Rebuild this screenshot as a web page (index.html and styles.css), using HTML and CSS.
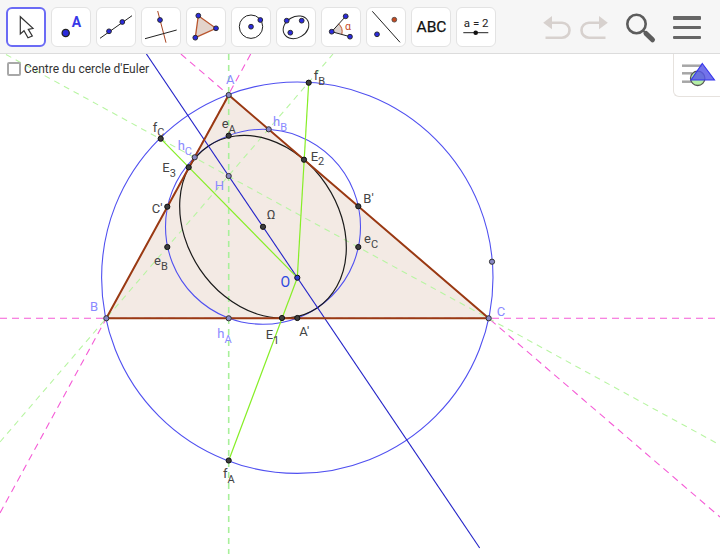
FILE: index.html
```html
<!DOCTYPE html>
<html lang="fr">
<head>
<meta charset="utf-8">
<title>Centre du cercle d'Euler</title>
<link rel="stylesheet" href="styles.css">
</head>
<body>
<div class="app">
  <header class="toolbar">
    <div class="tools">
      <button class="tool selected"><svg viewBox="0 0 36 36" class="ico"><path class="cursor" d="M12.300 7.700 L12.300 25 L16 21.700 L20 28.700 L24.300 27 L20.300 20.300 L25 19.300 Z"/></svg></button>
      <button class="tool"><svg viewBox="0 0 38 38" class="ico"><circle class="pt-big" cx="13.700" cy="25" r="3.600"/><text class="ico-a" x="19.700" y="18.700">A</text></svg></button>
      <button class="tool"><svg viewBox="0 0 38 38" class="ico"><line class="ln" x1="3" y1="30.300" x2="35" y2="7.700"/><circle class="pt" cx="12" cy="23.300" r="2.400"/><circle class="pt" cx="25.300" cy="14" r="2.400"/></svg></button>
      <button class="tool"><svg viewBox="0 0 38 38" class="ico"><line class="ln-red" x1="15.700" y1="3" x2="24" y2="34.700"/><line class="ln" x1="3" y1="30.700" x2="34.700" y2="22"/><circle class="pt" cx="18" cy="12" r="2.400"/></svg></button>
      <button class="tool"><svg viewBox="0 0 38 38" class="ico"><polygon class="tri" points="11.300,7.700 29,20.300 8.300,29.700"/><circle class="pt" cx="11.300" cy="7.700" r="2.400"/><circle class="pt" cx="29" cy="20.300" r="2.400"/><circle class="pt" cx="8.300" cy="29.700" r="2.400"/></svg></button>
      <button class="tool"><svg viewBox="0 0 38 38" class="ico"><circle class="ln-none" cx="19" cy="18.700" r="11.700"/><circle class="pt" cx="19" cy="18.700" r="2.400"/><circle class="pt" cx="28.300" cy="12" r="2.400"/></svg></button>
      <button class="tool"><svg viewBox="0 0 38 38" class="ico"><ellipse class="ln-none" cx="19" cy="19.300" rx="13.500" ry="10.500" transform="rotate(-30 19 19.300)"/><circle class="pt" cx="9.700" cy="12.700" r="2.400"/><circle class="pt" cx="24.700" cy="12.700" r="2.400"/><circle class="pt" cx="13.300" cy="24.700" r="2.400"/></svg></button>
      <button class="tool"><svg viewBox="0 0 38 38" class="ico"><path class="wedge" d="M9.700 23.700 L16.500 15.800 A10.500 10.500 0 0 1 19.800 26.300 Z"/><path class="arc" d="M16.500 15.800 A10.500 10.500 0 0 1 19.800 26.300"/><line class="ln" x1="9.700" y1="23.700" x2="23.700" y2="8.300"/><line class="ln" x1="9.700" y1="23.700" x2="28" y2="28.700"/><circle class="pt" cx="23.700" cy="8.300" r="2.400"/><circle class="pt" cx="9.700" cy="23.700" r="2.400"/><circle class="pt" cx="28" cy="28.700" r="2.400"/><text class="ico-alpha" x="23" y="21.700">α</text></svg></button>
      <button class="tool"><svg viewBox="0 0 38 38" class="ico"><line class="ln" x1="5.300" y1="3.300" x2="33" y2="34.300"/><circle class="pt-red" cx="27.300" cy="11.700" r="2.400"/><circle class="pt" cx="10" cy="26.300" r="2.400"/></svg></button>
      <button class="tool"><svg viewBox="0 0 38 38" class="ico"><text class="ico-abc" x="19.500" y="24.300">ABC</text></svg></button>
      <button class="tool"><svg viewBox="0 0 38 38" class="ico"><text class="ico-eq" x="19.200" y="18.700">a = 2</text><line class="ln" x1="6.300" y1="24.700" x2="31.300" y2="24.700"/><circle class="pt-black" cx="18.700" cy="24.700" r="2.300"/></svg></button>
    </div>
    <div class="actions">
      <svg class="act act-undo" viewBox="0 0 28 26"><path class="hist" d="M7 7.700 H19 A7.500 7.500 0 0 1 19 22.700 H2.500"/><path class="hist-head" d="M0.200 7.700 L9 1 V14.300 Z"/></svg>
      <svg class="act act-redo" viewBox="0 0 28 26"><path class="hist" d="M21 7.700 H9 A7.500 7.500 0 0 0 9 22.700 H25.500"/><path class="hist-head" d="M27.800 7.700 L19 1 V14.300 Z"/></svg>
      <svg class="act act-search" viewBox="0 0 30 30"><circle class="lens" cx="10.500" cy="11" r="9.200"/><line class="lens-stem" x1="17" y1="17.500" x2="20" y2="20.500"/><line class="lens-handle" x1="20" y1="20.500" x2="26.500" y2="26.800"/></svg>
      <div class="menu"><span class="bar"></span><span class="bar"></span><span class="bar"></span></div>
    </div>
  </header>
  <main class="canvas">
    <svg class="board" viewBox="0 54 720 500">
      <polygon class="t-fill" points="228.700,95 106.300,318.300 488.700,318.300"/>

      <line class="pink" x1="0" y1="318.300" x2="720" y2="318.300"/>
      <line class="pink" x1="0" y1="513" x2="250.700" y2="54"/>
      <line class="pink" x1="180.900" y1="54" x2="720" y2="517"/>

      <line class="lgreen vert" x1="228.700" y1="54" x2="228.700" y2="554"/>
      <line class="lgreen" x1="0" y1="442" x2="333" y2="54"/>
      <line class="lgreen" x1="6" y1="54.500" x2="720" y2="445"/>

      <circle class="blue" cx="297.300" cy="277.700" r="195.700"/>
      <circle class="blue" cx="263" cy="226.800" r="97.500"/>
      <ellipse class="black" cx="263" cy="226.800" rx="97.500" ry="76" transform="rotate(56 263 226.800)"/>

      <line class="euler" x1="146.400" y1="54" x2="479.700" y2="548"/>
      <line class="green" x1="228.700" y1="460.500" x2="297.300" y2="277.700"/>
      <line class="green" x1="308.700" y1="82.700" x2="297.300" y2="277.700"/>
      <line class="green" x1="160.700" y1="138.700" x2="297.300" y2="277.700"/>

      <polyline class="side" points="488.700,318.300 106.300,318.300 228.700,95 488.700,318.300"/>

      <circle class="p-grey" cx="228.700" cy="95" r="2.600"/>
      <circle class="p-grey" cx="106.300" cy="318.300" r="2.600"/>
      <circle class="p-grey" cx="488.700" cy="318.300" r="2.600"/>
      <circle class="p-grey" cx="228.700" cy="176" r="2.600"/>
      <circle class="p-grey" cx="228.700" cy="318.300" r="2.600"/>
      <circle class="p-grey" cx="268.700" cy="129.300" r="2.600"/>
      <circle class="p-grey" cx="194.700" cy="157.300" r="2.600"/>
      <circle class="p-grey" cx="492" cy="261.700" r="2.600"/>

      <circle class="p-dark" cx="228.700" cy="460.500" r="2.600"/>
      <circle class="p-dark" cx="308.700" cy="82.700" r="2.600"/>
      <circle class="p-dark" cx="160.700" cy="138.700" r="2.600"/>
      <circle class="p-dark" cx="282" cy="318" r="2.600"/>
      <circle class="p-dark" cx="304" cy="159.700" r="2.600"/>
      <circle class="p-dark" cx="188.700" cy="167.300" r="2.600"/>
      <circle class="p-dark" cx="228.700" cy="135.700" r="2.600"/>
      <circle class="p-dark" cx="167.300" cy="247" r="2.600"/>
      <circle class="p-dark" cx="358.300" cy="247" r="2.600"/>
      <circle class="p-dark" cx="297.300" cy="318" r="2.600"/>
      <circle class="p-dark" cx="358.300" cy="206.300" r="2.600"/>
      <circle class="p-dark" cx="167.300" cy="206.700" r="2.600"/>
      <circle class="p-dark" cx="263" cy="226.800" r="2.600"/>
      <circle class="p-o" cx="297.300" cy="277.700" r="2.600"/>

      <text class="lb-blue" x="226" y="84">A</text>
      <text class="lb-blue" x="90" y="311">B</text>
      <text class="lb-blue" x="496.700" y="316">C</text>
      <text class="lb-blue" x="214.700" y="190">H</text>
      <text class="lb-blue" x="217.300" y="338">h<tspan class="sub" dy="4.500">A</tspan></text>
      <text class="lb-blue" x="273" y="126">h<tspan class="sub" dy="4.500">B</tspan></text>
      <text class="lb-blue" x="177.700" y="150">h<tspan class="sub" dy="4.500">C</tspan></text>

      <text class="lb-dark" x="223" y="478">f<tspan class="sub" dy="4.500">A</tspan></text>
      <text class="lb-dark" x="313.700" y="80">f<tspan class="sub" dy="4.500">B</tspan></text>
      <text class="lb-dark" x="152.700" y="131.700">f<tspan class="sub" dy="4.500">C</tspan></text>
      <text class="lb-dark" x="265.700" y="339.300">E<tspan class="sub" dy="4.500">1</tspan></text>
      <text class="lb-dark" x="310.700" y="160.700">E<tspan class="sub" dy="4.500">2</tspan></text>
      <text class="lb-dark" x="162.300" y="172.300">E<tspan class="sub" dy="4.500">3</tspan></text>
      <text class="lb-dark" x="221.700" y="128">e<tspan class="sub" dy="4.500">A</tspan></text>
      <text class="lb-dark" x="154" y="265">e<tspan class="sub" dy="4.500">B</tspan></text>
      <text class="lb-dark" x="364" y="243.300">e<tspan class="sub" dy="4.500">C</tspan></text>
      <text class="lb-dark" x="299.300" y="336">A'</text>
      <text class="lb-dark" x="363.300" y="202.700">B'</text>
      <text class="lb-dark" x="151.700" y="213.300">C'</text>
      <text class="lb-dark" x="266.700" y="218.700">Ω</text>
      <text class="lb-o" x="280.500" y="286.500">O</text>
    </svg>

    <label class="euler-check">
      <span class="box"></span>
      <span class="check-text">Centre du cercle d'Euler</span>
    </label>

    <div class="style-tab">
      <svg class="style-ico" viewBox="0 0 34 26">
        <line class="sl" x1="0" y1="2.700" x2="20" y2="2.700"/>
        <line class="sl" x1="0" y1="10.300" x2="10" y2="10.300"/>
        <line class="sl" x1="0" y1="18.700" x2="10" y2="18.700"/>
        <circle class="s-circle" cx="15.700" cy="15.300" r="7.200"/>
        <polygon class="s-tri" points="20.300,0.500 32.500,17 9,17"/>
      </svg>
    </div>
  </main>
</div>
</body>
</html>
```
FILE: styles.css
```css
* { box-sizing: border-box; }
html, body { margin: 0; padding: 0; background: #fff; }
body { font-family: Roboto, "Liberation Sans", sans-serif; }
.app { width: 720px; height: 554px; display: flex; flex-direction: column; overflow: hidden; }

.toolbar {
  height: 54px; flex: none; display: flex; justify-content: space-between;
  background: #f6f6f6; border-bottom: 1px solid #dcdcdc; padding: 7px 0 0 6px;
}
.tools { display: flex; gap: 5px; }
.tool {
  width: 40px; height: 40px; padding: 0; background: #fff;
  border: 1px solid #e3e3e3; border-radius: 6px;
}
.tool.selected { border: 2px solid #6b6bf5; }
.ico { display: block; width: 38px; height: 38px; overflow: visible; }
.selected .ico { width: 36px; height: 36px; }

.cursor { fill: #fff; stroke: #333; stroke-width: 1.200; stroke-linejoin: miter; }
.pt { fill: #2b2bdc; stroke: #222; stroke-width: 0.900; }
.pt-big { fill: #2b2bdc; stroke: #222; stroke-width: 1.300; }
.pt-red { fill: #c4491f; stroke: #444; stroke-width: 0.800; }
.pt-black { fill: #111; }
.ln { stroke: #222; stroke-width: 1; }
.ln-red { stroke: #a8431f; stroke-width: 1; }
.ln-none { fill: none; stroke: #222; stroke-width: 1; }
.tri { fill: #e3d3cb; stroke: #b9562f; stroke-width: 1.300; }
.wedge { fill: #dcd3cf; }
.arc { fill: none; stroke: #c0532a; stroke-width: 1; }
.ico-a { font: 700 14px Roboto, "Liberation Sans", sans-serif; fill: #3838e8; }
.ico-alpha { font: 400 10.500px Roboto, "Liberation Sans", sans-serif; fill: #c4491f; }
.ico-abc { font: 400 15.500px Roboto, "Liberation Sans", sans-serif; fill: #111; text-anchor: middle; stroke: #111; stroke-width: 0.250; }
.ico-eq { font: 400 11.500px Roboto, "Liberation Sans", sans-serif; fill: #222; text-anchor: middle; }

.actions { display: flex; align-items: flex-start; padding-top: 6px; padding-right: 19.500px; }
.act { display: block; flex: none; overflow: visible; }
.act-undo { width: 28px; height: 26px; margin-top: 2px; }
.act-redo { width: 28px; height: 26px; margin-left: 9px; margin-top: 2px; }
.act-search { width: 30px; height: 30px; margin-left: 18px; }
.hist { fill: none; stroke: #d7d1ce; stroke-width: 2.600; }
.hist-head { fill: #d7d1ce; }
.lens { fill: none; stroke: #5c5c5c; stroke-width: 2.600; }
.lens-stem { stroke: #5c5c5c; stroke-width: 2; }
.lens-handle { stroke: #5c5c5c; stroke-width: 5; stroke-linecap: round; }
.menu { display: flex; flex-direction: column; gap: 6.250px; margin-left: 17px; margin-top: 3px; width: 28px; }
.bar { display: block; height: 3.500px; background: #666; border-radius: 1px; }

.canvas { position: relative; flex: 1; overflow: hidden; background: #fff; }
.board { position: absolute; left: 0; top: 0; width: 720px; height: 500px; display: block; }

.t-fill { fill: #f3eae4; stroke: none; }
.side { fill: none; stroke: #993a12; stroke-width: 2; stroke-linejoin: round; }
.blue { fill: none; stroke: #5050f0; stroke-width: 1.100; }
.black { fill: none; stroke: #1a1a1a; stroke-width: 1.200; }
.euler { stroke: #2323c8; stroke-width: 1.100; }
.green { stroke: #86ee26; stroke-width: 1.200; }
.pink { stroke: #f55bd6; stroke-width: 1.100; stroke-dasharray: 7 5; }
.lgreen { stroke: #b8f5a2; stroke-width: 1.100; stroke-dasharray: 6 5; }
.lgreen.vert { stroke: #a8f09a; stroke-width: 1.600; }

.p-grey { fill: #8888c4; stroke: #333; stroke-width: 1; }
.p-dark { fill: #3d3d3d; stroke: #111; stroke-width: 1; }
.p-o { fill: #2f3fd0; stroke: #111; stroke-width: 1; }

.lb-blue, .lb-dark, .lb-o { font-family: Roboto, "Liberation Sans", sans-serif; font-size: 13px; }
.lb-blue { fill: #8a8aff; }
.lb-dark { fill: #444; }
.lb-o { fill: #2d48e0; font-size: 14px; }
.sub { font-size: 11px; }

.euler-check { position: absolute; left: 7px; top: 8px; display: flex; align-items: center; gap: 3px; }
.box { display: block; width: 14px; height: 14px; border: 2px solid #a8a8a8; border-radius: 2px; background: #fff; }
.check-text { font-size: 12px; line-height: 14px; color: #333; white-space: nowrap; }

.style-tab {
  position: absolute; right: 0; top: 0; width: 47px; height: 43px;
  background: #fff; border-left: 1px solid #e6e2de; border-bottom: 1px solid #e6e2de;
  border-bottom-left-radius: 6px; padding: 9px 0 0 8px;
}
.style-ico { display: block; width: 34px; height: 26px; overflow: visible; }
.sl { stroke: #a6a6a6; stroke-width: 2.500; }
.s-circle { fill: #b5efa5; stroke: #555; stroke-width: 1.300; }
.s-tri { fill: #5a5ae6; fill-opacity: 0.850; stroke: #3434ee; stroke-width: 1.100; }
```
